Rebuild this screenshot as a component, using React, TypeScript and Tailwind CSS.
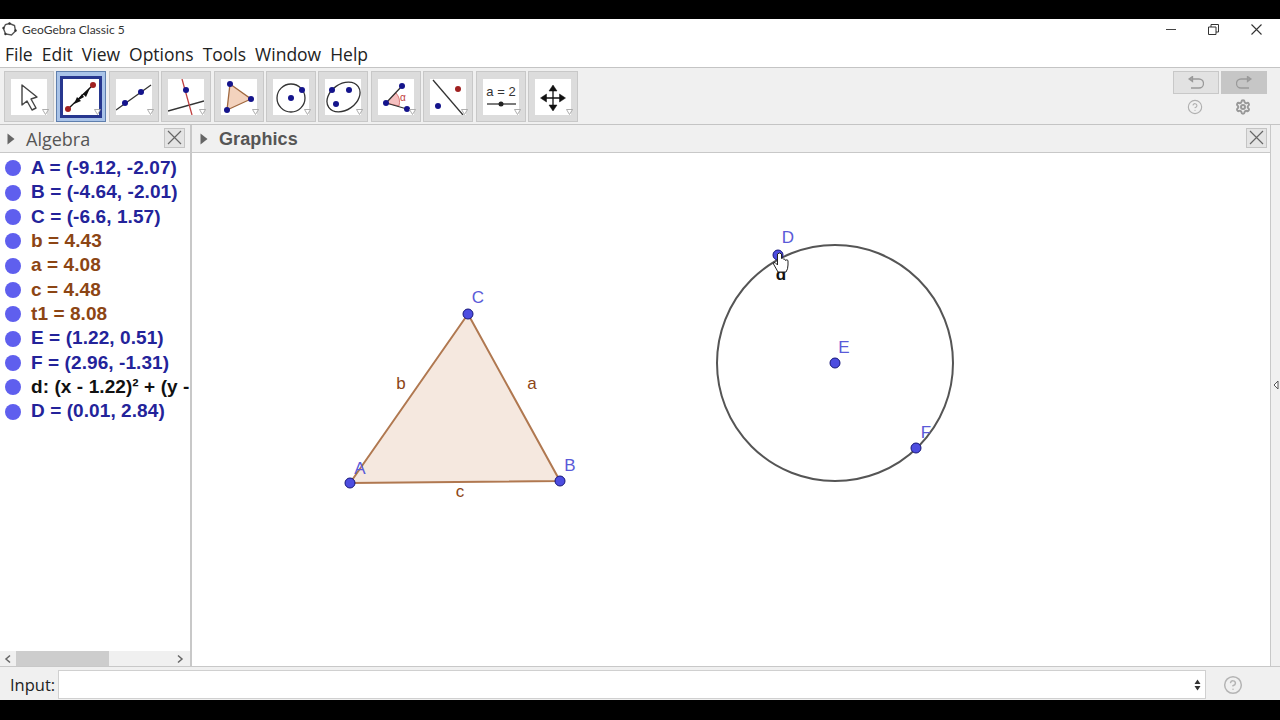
import { CircleHelp, Settings } from "lucide-react"
import type { ReactNode } from "react"

const sans = "font-['Open_Sans','Noto_Sans',sans-serif]"
const arial = "font-['Liberation_Sans',Arial,sans-serif]"

const navy = "#14148c"
const maroon = "#a02020"

function Pt({ x, y, c = navy, r = 3 }: { x: number; y: number; c?: string; r?: number }) {
  return <circle cx={x} cy={y} r={r} fill={c} />
}

const toolIcons: ReactNode[] = [
  <path key="0" d="M11 6 L11 26 L16 22 L21 31 L25 29 L20 20 L26 18 Z" fill="#fff" stroke="#444" strokeWidth="1.4" strokeLinejoin="round" />,
  <g key="1">
    <line x1="5" y1="30" x2="30" y2="6" stroke="#111" strokeWidth="1.3" />
    <path d="M11 25 L14 18 L18 22 Z M20 15 L27 9 L23 18 Z M14 22 L19 15 L21 18 Z" fill="#111" />
    <Pt x={5} y={30} c={maroon} />
    <Pt x={30} y={6} c={maroon} />
  </g>,
  <g key="2">
    <line x1="0" y1="31" x2="35" y2="6" stroke="#333" strokeWidth="1.3" />
    <Pt x={9} y={24} />
    <Pt x={25} y={13} />
  </g>,
  <g key="3">
    <line x1="0" y1="32" x2="36" y2="22" stroke="#333" strokeWidth="1.3" />
    <line x1="14" y1="0" x2="24" y2="36" stroke="#c04040" strokeWidth="1.3" />
    <Pt x={18} y={11} />
  </g>,
  <g key="4">
    <path d="M9 5 L30 20 L6 31 Z" fill="#f3d2bd" stroke="#a0683f" strokeWidth="1.3" />
    <Pt x={9} y={5} />
    <Pt x={30} y={20} />
    <Pt x={6} y={31} />
  </g>,
  <g key="5">
    <circle cx="18" cy="19" r="14" fill="none" stroke="#333" strokeWidth="1.3" />
    <Pt x={18} y={19} />
    <Pt x={29} y={11} />
  </g>,
  <g key="6">
    <ellipse cx="18.5" cy="18" rx="18" ry="13" transform="rotate(-35 18.5 18)" fill="none" stroke="#333" strokeWidth="1.3" />
    <Pt x={7} y={11} />
    <Pt x={24} y={11} />
    <Pt x={11} y={25} />
  </g>,
  <g key="7">
    <path d="M8 24 L18 14 A14 14 0 0 1 21 27 Z" fill="#f5c0c0" stroke="#d06060" strokeWidth="0.8" />
    <path d="M8 24 L24 7 M8 24 L29 30" stroke="#333" strokeWidth="1.3" fill="none" />
    <Pt x={8} y={24} />
    <Pt x={24} y={7} />
    <Pt x={29} y={30} />
    <text x="22" y="22" fontSize="10" fill="#c04040" fontFamily="Liberation Sans">α</text>
  </g>,
  <g key="8">
    <line x1="3" y1="1" x2="33" y2="36" stroke="#333" strokeWidth="1.3" />
    <Pt x={28} y={10} c={maroon} />
    <Pt x={8} y={27} />
  </g>,
  <g key="9">
    <text x="18" y="17" textAnchor="middle" fontSize="13" fill="#333" fontFamily="Liberation Sans">a = 2</text>
    <line x1="4" y1="25" x2="33" y2="25" stroke="#333" strokeWidth="1.3" />
    <circle cx="18" cy="25" r="2.5" fill="#222" />
  </g>,
  <g key="10" stroke="#111" fill="#111">
    <path d="M18 10 V28 M9 19 H27" strokeWidth="1.3" />
    <path d="M18 6 L14 12 H22 Z M18 32 L14 26 H22 Z M5.5 19 L11.5 15 V23 Z M30.5 19 L24.5 15 V23 Z" strokeWidth="0.5" />
  </g>,
]

function ToolButton({ active, children }: { active?: boolean; children: ReactNode }) {
  return (
    <div
      className={
        active
          ? "relative flex h-[51px] w-[50px] items-center justify-center border border-[#5f7fae] bg-[#a9c3e8]"
          : "relative flex h-[51px] w-[50px] items-center justify-center border border-[#c8c8c8] bg-[#dcdcdc]"
      }
    >
      <div className={active ? "border-[3px] border-[#27378f] bg-white" : "bg-white"}>
        <svg width="36" height="36" viewBox="0 0 36 36" className="block">
          {children}
        </svg>
      </div>
      <svg width="7" height="6" viewBox="0 0 7 6" className="absolute bottom-[6px] right-[4px]">
        <path d="M0.5 0.5 H6.5 L3.5 5.5 Z" fill="#fff" stroke="#999" strokeWidth="0.8" />
      </svg>
    </div>
  )
}

function CloseBox() {
  return (
    <div className="mb-[2px] flex h-[20px] w-[21px] items-center justify-center border border-[#c4c4c4] bg-[#e4e4e4]">
      <svg width="15" height="15" viewBox="0 0 15 15">
        <path d="M1 1 L14 14 M14 1 L1 14" stroke="#666" strokeWidth="1.2" />
      </svg>
    </div>
  )
}

function Caret() {
  return (
    <svg width="8" height="12" viewBox="0 0 8 12" className="shrink-0">
      <path d="M0.5 0.5 L7.5 6 L0.5 11.5 Z" fill="#666" />
    </svg>
  )
}

const blue = "text-[#23239a]"
const brown = "text-[#8c4514]"
const algebra = [
  { t: "A = (-9.12, -2.07)", c: blue },
  { t: "B = (-4.64, -2.01)", c: blue },
  { t: "C = (-6.6, 1.57)", c: blue },
  { t: "b = 4.43", c: brown },
  { t: "a = 4.08", c: brown },
  { t: "c = 4.48", c: brown },
  { t: "t1 = 8.08", c: brown },
  { t: "E = (1.22, 0.51)", c: blue },
  { t: "F = (2.96, -1.31)", c: blue },
  { t: "d: (x - 1.22)² + (y - 0.51)² = 14.02", c: "text-[#111]" },
  { t: "D = (0.01, 2.84)", c: blue },
]

function GeoPoint({ x, y }: { x: number; y: number }) {
  return <circle cx={x} cy={y} r="5" fill="#4d4de0" stroke="#16167a" strokeWidth="1" />
}

function Label({ x, y, c, children }: { x: number; y: number; c: string; children: string }) {
  return (
    <text x={x} y={y} fontSize="17" fill={c} textAnchor="middle" fontFamily="Liberation Sans">
      {children}
    </text>
  )
}

export default function App() {
  return (
    <div className={`flex h-[720px] w-[1280px] flex-col overflow-hidden bg-black ${sans}`}>
      <div className="h-[19px] shrink-0 bg-black" />

      <div className="flex h-[21px] shrink-0 items-center bg-white pl-[2px]">
        <svg width="15" height="15" viewBox="0 0 15 15">
          <path d="M7.5 1.5 L12.5 3.5 L13.5 9 L9.5 13 L3.5 12 L1.5 6.5 L3.5 2.5 Z" fill="none" stroke="#555" strokeWidth="1.4" />
          <g fill="#333">
            <circle cx="7.5" cy="1.5" r="1.2" />
            <circle cx="13.5" cy="8.5" r="1.2" />
            <circle cx="3.5" cy="12" r="1.2" />
            <circle cx="1.5" cy="6" r="1.2" />
          </g>
        </svg>
        <span className="ml-[5px] font-['Lato',sans-serif] text-[12px] text-[#333]">GeoGebra Classic 5</span>
        <div className="ml-auto flex items-center">
          <svg width="10" height="2" viewBox="0 0 10 2" className="mr-[32px]">
            <rect width="10" height="1" fill="#444" />
          </svg>
          <svg width="11" height="11" viewBox="0 0 11 11" className="mr-[32px]">
            <path d="M0.5 3 H8 V10.5 H0.5 Z M3 3 V0.5 H10.5 V8 H8" fill="none" stroke="#333" strokeWidth="1" />
          </svg>
          <svg width="11" height="11" viewBox="0 0 11 11" className="mr-[18px]">
            <path d="M0.5 0.5 L10.5 10.5 M10.5 0.5 L0.5 10.5" stroke="#333" strokeWidth="1.1" />
          </svg>
        </div>
      </div>

      <div className="flex h-[27px] shrink-0 items-center gap-[9px] bg-white pl-[5px] pt-[2px] text-[17.5px] text-[#222]">
        <span>File</span>
        <span>Edit</span>
        <span>View</span>
        <span>Options</span>
        <span>Tools</span>
        <span>Window</span>
        <span>Help</span>
      </div>

      <div className="flex min-h-0 flex-1 flex-col bg-[#f0f0f0]">
        <div className="flex h-[58px] shrink-0 items-start border-t border-b border-[#c4c4c4] pl-[4px] pt-[3px]">
          <div className="flex gap-[2.4px]">
            {toolIcons.map((icon, i) => (
              <ToolButton key={i} active={i === 1}>
                {icon}
              </ToolButton>
            ))}
          </div>
          <div className="ml-auto mr-[13px] flex w-[94px] flex-col">
            <div className="flex gap-[2px]">
              <div className="flex h-[23px] w-[46px] items-center justify-center border border-[#c8c8c8] bg-[#e2e2e2]">
                <svg width="16" height="13" viewBox="0 0 16 13">
                  <path d="M1 3 H11 A4 4 0 0 1 11 12 H3 M1 3 L4.5 0.5 V5.5 Z" fill="none" stroke="#9a9a9a" strokeWidth="1.3" />
                </svg>
              </div>
              <div className="flex h-[23px] w-[46px] items-center justify-center bg-[#c6c6c6]">
                <svg width="16" height="13" viewBox="0 0 16 13">
                  <path d="M15 3 H5 A4 4 0 0 0 5 12 H13 M15 3 L11.5 0.5 V5.5 Z" fill="none" stroke="#9a9a9a" strokeWidth="1.3" />
                </svg>
              </div>
            </div>
            <div className="mt-[5px] flex pl-[14px]">
              <CircleHelp size={16} color="#b0b0b0" strokeWidth={1.7} />
              <Settings size={16} color="#999" strokeWidth={3} className="ml-[32px]" />
            </div>
          </div>
        </div>

        <div className="flex min-h-0 flex-1">
          <div className="flex w-[192px] shrink-0 flex-col border-r-2 border-[#c8c8c8]">
            <div className="flex h-[28px] shrink-0 items-center border-b border-[#c8c8c8] pl-[7px] pr-[5px]">
              <Caret />
              <span className="ml-[11px] mt-[2px] text-[18px] text-[#555]">Algebra</span>
              <div className="ml-auto">
                <CloseBox />
              </div>
            </div>
            <div className={`min-h-0 flex-1 overflow-hidden bg-white pt-[3px] ${arial}`}>
              {algebra.map((row) => (
                <div key={row.t} className="flex h-[24.35px] items-center whitespace-nowrap">
                  <span className="ml-[5px] h-[16px] w-[16px] shrink-0 rounded-full bg-[#5f5fee]" />
                  <span className={`ml-[10px] text-[19px] font-bold tracking-[0.08px] ${row.c}`}>{row.t}</span>
                </div>
              ))}
            </div>
            <div className="flex h-[15px] shrink-0 items-center bg-[#f0f0f0]">
              <svg width="16" height="10" viewBox="0 0 16 10">
                <path d="M10 1.5 L6 5 L10 8.5" fill="none" stroke="#666" strokeWidth="1.5" />
              </svg>
              <div className="h-full w-[93px] bg-[#cdcdcd]" />
              <svg width="16" height="10" viewBox="0 0 16 10" className="ml-[63px]">
                <path d="M6 1.5 L10 5 L6 8.5" fill="none" stroke="#666" strokeWidth="1.5" />
              </svg>
            </div>
          </div>

          <div className="flex min-w-0 flex-1 flex-col">
            <div className="flex h-[28px] shrink-0 items-center border-b border-[#c8c8c8] pl-[8px] pr-[3px]">
              <Caret />
              <span className={`ml-[11px] mt-[2px] text-[18px] font-bold tracking-[0.1px] text-[#555] ${arial}`}>Graphics</span>
              <div className="ml-auto">
                <CloseBox />
              </div>
            </div>
            <div className="min-h-0 flex-1 bg-white">
              <svg width="1078" height="513" viewBox="192 153 1078 513" className="block">
                <polygon points="350,483 560,481 468,314" fill="#f5e8df" stroke="#b07850" strokeWidth="2" strokeLinejoin="round" />
                <circle cx="835" cy="363" r="118" fill="none" stroke="#555" strokeWidth="2" />
                <GeoPoint x={350} y={483} />
                <GeoPoint x={560} y={481} />
                <GeoPoint x={468} y={314} />
                <GeoPoint x={835} y={363} />
                <GeoPoint x={916} y={448} />
                <GeoPoint x={778} y={255} />
                <Label x={360} y={474} c="#5a5ad8">A</Label>
                <Label x={570} y={471} c="#5a5ad8">B</Label>
                <Label x={478} y={303} c="#5a5ad8">C</Label>
                <Label x={788} y={243} c="#5a5ad8">D</Label>
                <Label x={844} y={353} c="#5a5ad8">E</Label>
                <Label x={926} y={438} c="#5a5ad8">F</Label>
                <Label x={401} y={389} c="#8c4514">b</Label>
                <Label x={532} y={389} c="#8c4514">a</Label>
                <Label x={460} y={497} c="#8c4514">c</Label>
                <text x={781} y={280} fontSize="17" fontWeight="bold" fill="#111" textAnchor="middle" fontFamily="Liberation Sans">
                  d
                </text>
                <path
                  d="M777.5 259 V265 L775 262.5 Q773.5 262 773.5 264 L778 272 H786 Q788 269 788 265 V260.5 Q787 259 785.5 260.5 Q785 258.5 783.5 259 Q782.5 257.5 781.5 258.5 V254 Q779.5 252 777.5 254 Z"
                  fill="#fff"
                  stroke="#222"
                  strokeWidth="1"
                />
              </svg>
            </div>
          </div>

          <div className="flex w-[10px] shrink-0 items-center justify-center border-l border-[#c8c8c8] bg-[#f0f0f0] pb-[21px]">
            <svg width="6" height="10" viewBox="0 0 6 10">
              <path d="M5 1 L1 5 L5 9 Z" fill="#fff" stroke="#555" strokeWidth="1" />
            </svg>
          </div>
        </div>

        <div className="flex h-[34px] shrink-0 items-start border-t border-[#c8c8c8] pl-[10px] pt-[3px]">
          <span className="mt-[3px] w-[48px] shrink-0 text-[16.5px] text-[#222]">Input:</span>
          <div className="flex h-[29px] w-[1148px] items-center justify-end border border-[#d0d0d0] bg-white pr-[4px]">
            <svg width="7" height="12" viewBox="0 0 7 12">
              <path d="M3.5 0.5 L6.5 5 H0.5 Z M3.5 11.5 L6.5 7 H0.5 Z" fill="#333" />
            </svg>
          </div>
          <CircleHelp size={20} color="#b4b4b4" strokeWidth={1.8} className="ml-[17px] mt-[5px]" />
        </div>
      </div>

      <div className="h-[20px] shrink-0 bg-black" />
    </div>
  )
}
